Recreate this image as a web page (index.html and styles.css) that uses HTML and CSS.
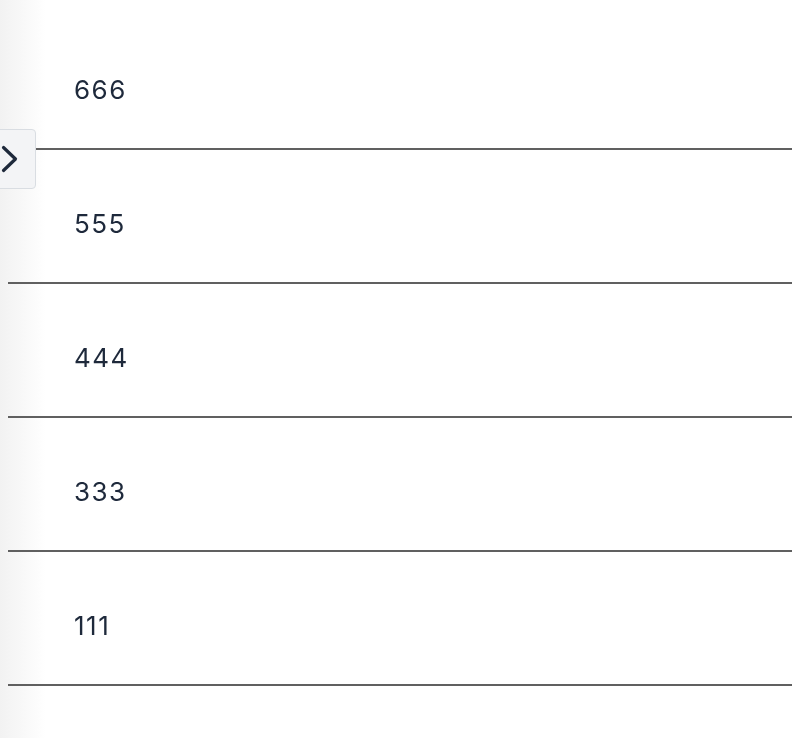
FILE: index.html
```html
<!DOCTYPE html>
<html>
<head>
<meta charset="utf-8">
<link rel="stylesheet" href="styles.css">
</head>
<body>
<div class="shade"></div>
<ul class="list">
  <li class="row"><span class="label">666</span></li>
  <li class="row"><span class="label">555</span></li>
  <li class="row"><span class="label">444</span></li>
  <li class="row"><span class="label">333</span></li>
  <li class="row"><span class="label">111</span></li>
</ul>
<button class="toggle" aria-label="Expand">
  <svg width="18" height="28" viewBox="0 0 18 28"><path d="M2.5 2.5 L14.5 14 L2.5 25.5" fill="none" stroke="#1e293b" stroke-width="3.2" stroke-linecap="round" stroke-linejoin="round"/></svg>
</button>
</body>
</html>
```
FILE: styles.css
```css
html, body {
  margin: 0;
  padding: 0;
  background: #fff;
}
body {
  padding: 8px 0 0 8px;
  font-family: Inter, "Liberation Sans", sans-serif;
  position: relative;
  min-height: 730px;
}
.shade {
  position: fixed;
  left: 0;
  top: 0;
  bottom: 0;
  width: 46px;
  background: linear-gradient(to right, #f2f2f2, #ffffff);
  z-index: 0;
}
.list {
  list-style: none;
  margin: 0;
  padding: 8px 0 0 0;
  position: relative;
  z-index: 1;
}
.row {
  height: 132px;
  border-bottom: 2px solid #606060;
  box-sizing: content-box;
  padding-left: 66px;
  display: flex;
  align-items: flex-start;
}
.label {
  margin-top: 58px;
  font-size: 26px;
  line-height: 32px;
  color: #1e293b;
  letter-spacing: 1.5px;
}
.toggle {
  position: absolute;
  left: -20px;
  top: 129px;
  width: 56px;
  height: 60px;
  border: 1px solid #d9dde2;
  border-radius: 4px;
  background: #f3f4f6;
  padding: 0 0 0 20px;
  display: flex;
  align-items: center;
  z-index: 2;
}
.toggle svg {
  display: block;
}
```
